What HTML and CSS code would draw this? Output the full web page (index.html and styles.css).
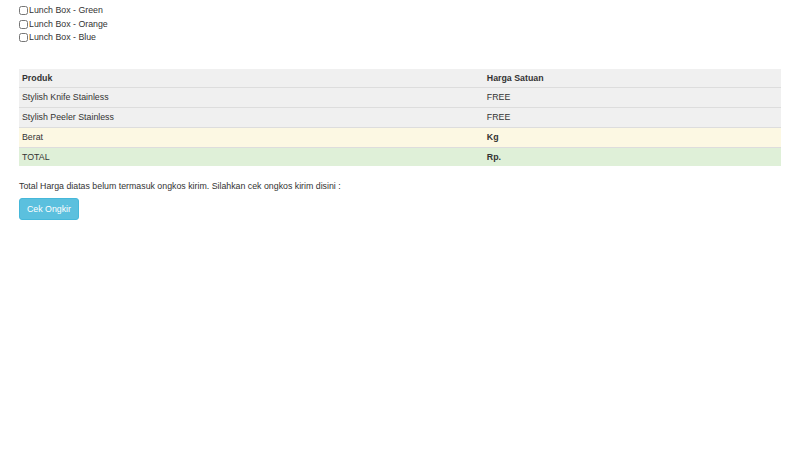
FILE: index.html
```html
<!DOCTYPE html>
<html lang="en">
    <head>
        <meta charset="UTF-8" />
        <title>Keranjang</title>
        <link rel="stylesheet" href="styles.css">
    </head>

    <body>
        <div class="container">
            <div class="options">
                <label class="option"><input type="checkbox" /> Lunch Box - Green</label>
                <label class="option"><input type="checkbox" /> Lunch Box - Orange</label>
                <label class="option"><input type="checkbox" /> Lunch Box - Blue</label>
            </div>

            <table class="cart">
                <thead>
                    <tr>
                        <th class="col-name">Produk</th>
                        <th>Harga Satuan</th>
                    </tr>
                </thead>
                <tbody>
                    <tr>
                        <td>Stylish Knife Stainless</td>
                        <td>FREE</td>
                    </tr>
                    <tr>
                        <td>Stylish Peeler Stainless</td>
                        <td>FREE</td>
                    </tr>
                    <tr class="warning">
                        <td>Berat</td>
                        <td><b>Kg</b></td>
                    </tr>
                    <tr class="success">
                        <td>TOTAL</td>
                        <td><b>Rp.</b></td>
                    </tr>
                </tbody>
            </table>

            <p class="note">Total Harga diatas belum termasuk ongkos kirim. Silahkan cek ongkos kirim disini :</p>
            <button type="button" class="btn btn-info">Cek Ongkir</button>
        </div>
    </body>
</html>
```

FILE: styles.css
```css
body {
    margin: 0;
    font-family: "Liberation Sans", Arial, sans-serif;
    font-size: 8.8px;
    color: #333;
    background-color: #fff;
}

.container {
    padding: 4px 19px;
}

.options {
    display: flex;
    flex-direction: column;
}

.option {
    display: flex;
    align-items: center;
    height: 13.5px;
    line-height: 13.5px;
}

.option input {
    width: 9px;
    height: 9px;
    margin: 0 1px 0 0;
}

.cart {
    width: 100%;
    margin-top: 24px;
    border-collapse: collapse;
}

.cart th,
.cart td {
    text-align: left;
    padding: 3px 3px;
    height: 12.8px;
    line-height: 12.8px;
    border-top: 1px solid #ddd;
}

.cart thead th {
    border-top: none;
    border-bottom: 1px solid #ddd;
    background-color: #f0f0f0;
}

.cart .col-name {
    width: 61%;
}

.cart tbody tr {
    background-color: #f0f0f0;
}

.cart tr.warning {
    background-color: #fcf8e3;
}

.cart tr.success {
    background-color: #dff0d8;
}

.note {
    margin: 14px 0 6px;
    line-height: 12px;
}

.btn {
    font-family: inherit;
    font-size: 8.8px;
    padding: 0 7px;
    width: 60px;
    height: 22px;
    border-radius: 3px;
    cursor: pointer;
}

.btn-info {
    color: #fff;
    background-color: #5bc0de;
    border: 1px solid #46b8da;
}
```
